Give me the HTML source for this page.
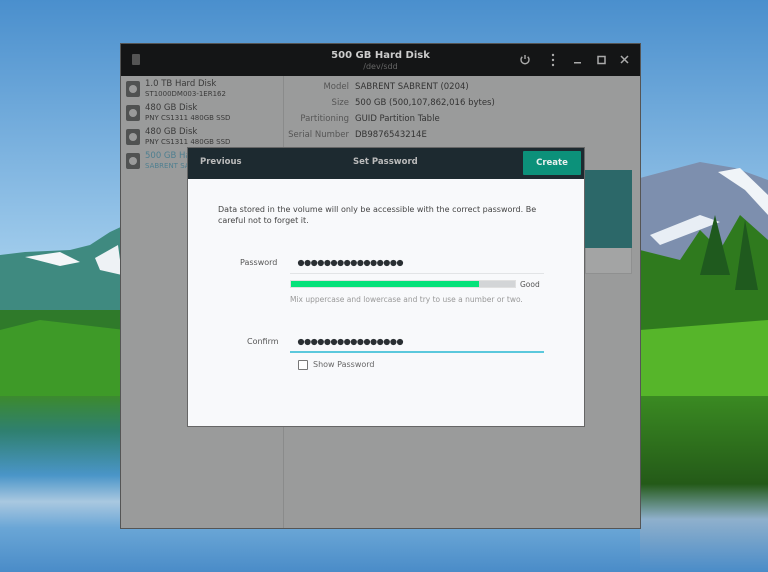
<!DOCTYPE html>
<html><head><style>
*{margin:0;padding:0;box-sizing:border-box}
body{width:768px;height:572px;overflow:hidden;position:relative;font-family:"Liberation Sans","DejaVu Sans",sans-serif;}
.bg{position:absolute;left:0;top:0}
.win{position:absolute;left:120px;top:43px;width:521px;height:486px;background:#9a9b9b;border:1px solid #555;}
.hdr{position:absolute;left:0;top:0;width:100%;height:32px;background:#141516;color:#fff;}
.t1{position:absolute;left:0;width:100%;text-align:center;top:6px;font-size:10px;font-weight:bold;color:#ccc;font-family:"DejaVu Sans",sans-serif}
.t2{position:absolute;left:0;width:100%;text-align:center;top:18px;font-size:8px;color:#666;font-family:"DejaVu Sans",sans-serif}
.side{position:absolute;left:0;top:32px;width:163px;bottom:0;border-right:1px solid #8a8b8b;}
.it{position:absolute;left:5px;height:24px;font-family:"DejaVu Sans",sans-serif}
.ic{position:absolute;left:0;top:3px;width:14px;height:16px;background:#505252;border-radius:2px}
.ic:after{content:"";position:absolute;left:3px;top:4px;width:8px;height:8px;border-radius:50%;background:#9a9b9b}
.n1{position:absolute;left:19px;top:1px;font-size:8.5px;color:#3a3a3a;white-space:nowrap}
.n2{position:absolute;left:19px;top:12px;font-size:7px;color:#3a3a3a;white-space:nowrap}
.lab{position:absolute;width:100px;text-align:right;left:128px;font-size:8.5px;color:#555;font-family:"DejaVu Sans",sans-serif}
.val{position:absolute;left:234px;font-size:8.5px;color:#333;font-family:"DejaVu Sans",sans-serif;white-space:nowrap}
.dlg{position:absolute;left:187px;top:147px;width:398px;height:280px;background:#f8f9fb;border:1px solid #666;font-family:"DejaVu Sans",sans-serif}
.dh{position:absolute;left:0;top:0;width:100%;height:31px;background:#1d2a30;}
.dh span{position:absolute;top:9px;font-size:8.5px;font-weight:bold;color:#bbb}
.btn{position:absolute;left:335px;top:3px;width:58px;height:24px;background:#0c917a;color:#e8f0ee;font-size:8.5px;font-weight:bold;text-align:center;line-height:24px;border-radius:1px}
.dots{position:absolute;left:109px}
</style></head><body>
<svg class="bg" width="768" height="572" viewBox="0 0 768 572">
<defs>
<linearGradient id="sky" x1="0" y1="0" x2="0" y2="1"><stop offset="0" stop-color="#4a8fcd"/><stop offset="0.5" stop-color="#a9d2ef"/><stop offset="1" stop-color="#b5daf2"/></linearGradient>
<linearGradient id="lake" x1="0" y1="0" x2="0" y2="1"><stop offset="0" stop-color="#3c8a2e"/><stop offset="0.2" stop-color="#2f8070"/><stop offset="0.45" stop-color="#4a95c8"/><stop offset="0.6" stop-color="#a9c8e0"/><stop offset="0.75" stop-color="#6aa6d6"/><stop offset="1" stop-color="#4a8cc8"/></linearGradient>
<linearGradient id="lake2" x1="0" y1="0" x2="0" y2="1"><stop offset="0" stop-color="#3a8a22"/><stop offset="0.5" stop-color="#245a18"/><stop offset="0.7" stop-color="#8fb0cc"/><stop offset="1" stop-color="#4a8cc8"/></linearGradient>
</defs>
<rect width="768" height="572" fill="url(#sky)"/>
<polygon points="0,255 25,252 70,250 90,245 110,232 125,225 125,340 0,340" fill="#3f8a80"/>
<polygon points="25,257 60,252 80,262 60,266" fill="#f4f6f8"/>
<polygon points="95,258 118,245 122,275 100,270" fill="#eef2f5"/>
<polygon points="640,178 700,162 735,168 768,180 768,300 640,300" fill="#7d8fae"/>
<polygon points="718,172 740,168 768,195 768,215 745,190" fill="#f0f4f8"/>
<polygon points="650,235 700,215 720,222 660,245" fill="#e8eef5"/>
<rect x="0" y="310" width="125" height="88" fill="#2f7a2a"/>
<polygon points="640,250 680,260 700,230 720,250 740,215 768,240 768,398 640,398" fill="#2f7a1e"/>
<polygon points="640,330 768,320 768,398 640,398" fill="#56b52a"/>
<polygon points="0,330 40,320 125,330 125,398 0,398" fill="#3e9a28"/>
<polygon points="700,275 715,215 730,275" fill="#1f5a1e"/>
<polygon points="735,290 745,220 758,290" fill="#1f5a1e"/>
<rect x="0" y="396" width="768" height="176" fill="url(#lake)"/>
<rect x="640" y="396" width="128" height="176" fill="url(#lake2)"/>
</svg>
<div class="win">
 <div class="hdr">
  <div style="position:absolute;left:11px;top:10px;width:8px;height:11px;background:#555;border-radius:1px"></div>
  <div class="t1">500 GB Hard Disk</div><div class="t2">/dev/sdd</div>
  <svg style="position:absolute;left:398px;top:8px" width="120" height="16" viewBox="0 0 120 16">
   <path d="M6 3v4M3.3 4.8a4 4 0 1 0 5.4 0" stroke="#aaa" stroke-width="1.4" fill="none"/>
   <circle cx="34" cy="3" r="1.2" fill="#aaa"/><circle cx="34" cy="8" r="1.2" fill="#aaa"/><circle cx="34" cy="13" r="1.2" fill="#aaa"/>
   <rect x="55" y="10" width="7" height="1.5" fill="#aaa"/>
   <rect x="79" y="4.5" width="7" height="7" stroke="#aaa" stroke-width="1.5" fill="none"/>
   <path d="M102 4l7 7M109 4l-7 7" stroke="#aaa" stroke-width="1.5"/>
  </svg>
 </div>
 <div class="side">
  <div class="it" style="top:2px"><div class="ic"></div><div class="n1">1.0 TB Hard Disk</div><div class="n2">ST1000DM003-1ER162</div></div>
  <div class="it" style="top:26px"><div class="ic"></div><div class="n1">480 GB Disk</div><div class="n2">PNY CS1311 480GB SSD</div></div>
  <div class="it" style="top:50px"><div class="ic"></div><div class="n1">480 GB Disk</div><div class="n2">PNY CS1311 480GB SSD</div></div>
  <div class="it" style="top:74px"><div class="ic"></div><div class="n1" style="color:#4f7f90">500 GB Hard Disk</div><div class="n2" style="color:#4f7f90">SABRENT SABRENT</div></div>
 </div>
 <div class="lab" style="top:38px">Model</div><div class="val" style="top:38px">SABRENT SABRENT (0204)</div>
 <div class="lab" style="top:54px">Size</div><div class="val" style="top:54px">500 GB (500,107,862,016 bytes)</div>
 <div class="lab" style="top:70px">Partitioning</div><div class="val" style="top:70px">GUID Partition Table</div>
 <div class="lab" style="top:86px">Serial Number</div><div class="val" style="top:86px">DB9876543214E</div>
 <div style="position:absolute;left:464px;top:126px;width:47px;height:78px;background:#2c6869"></div>
 <div style="position:absolute;left:464px;top:204px;width:47px;height:26px;background:#a3a4a4;border:1px solid #8f9090;border-top:0"></div>
</div>
<div class="dlg">
 <div class="dh"><span style="left:12px">Previous</span><span style="left:165px">Set Password</span><div class="btn">Create</div></div>
 <div style="position:absolute;left:30px;top:56px;width:345px;font-size:8px;line-height:11px;color:#444">Data stored in the volume will only be accessible with the correct password. Be careful not to forget it.</div>
 <div style="position:absolute;left:52px;top:110px;font-size:8px;color:#555">Password</div>
 <svg class="dots" style="top:111px" width="110" height="8"><g fill="#2a2f33">
 <circle cx="4" cy="4" r="3.1"/><circle cx="10.6" cy="4" r="3.1"/><circle cx="17.2" cy="4" r="3.1"/><circle cx="23.8" cy="4" r="3.1"/><circle cx="30.4" cy="4" r="3.1"/><circle cx="37" cy="4" r="3.1"/><circle cx="43.6" cy="4" r="3.1"/><circle cx="50.2" cy="4" r="3.1"/><circle cx="56.8" cy="4" r="3.1"/><circle cx="63.4" cy="4" r="3.1"/><circle cx="70" cy="4" r="3.1"/><circle cx="76.6" cy="4" r="3.1"/><circle cx="83.2" cy="4" r="3.1"/><circle cx="89.8" cy="4" r="3.1"/><circle cx="96.4" cy="4" r="3.1"/><circle cx="103" cy="4" r="3.1"/></g></svg>
 <div style="position:absolute;left:102px;top:125px;width:254px;height:1px;background:#e2e4e6"></div>
 <div style="position:absolute;left:102px;top:132px;width:226px;height:8px;background:#d3d5d7;border:1px solid #e0e0e0"></div>
 <div style="position:absolute;left:103px;top:133px;width:188px;height:6px;background:#05e27a"></div>
 <div style="position:absolute;left:332px;top:132px;font-size:7.5px;color:#555">Good</div>
 <div style="position:absolute;left:102px;top:147px;font-size:7.5px;color:#999">Mix uppercase and lowercase and try to use a number or two.</div>
 <div style="position:absolute;left:59px;top:189px;font-size:8px;color:#555">Confirm</div>
 <svg class="dots" style="top:190px" width="110" height="8"><g fill="#2a2f33">
 <circle cx="4" cy="4" r="3.1"/><circle cx="10.6" cy="4" r="3.1"/><circle cx="17.2" cy="4" r="3.1"/><circle cx="23.8" cy="4" r="3.1"/><circle cx="30.4" cy="4" r="3.1"/><circle cx="37" cy="4" r="3.1"/><circle cx="43.6" cy="4" r="3.1"/><circle cx="50.2" cy="4" r="3.1"/><circle cx="56.8" cy="4" r="3.1"/><circle cx="63.4" cy="4" r="3.1"/><circle cx="70" cy="4" r="3.1"/><circle cx="76.6" cy="4" r="3.1"/><circle cx="83.2" cy="4" r="3.1"/><circle cx="89.8" cy="4" r="3.1"/><circle cx="96.4" cy="4" r="3.1"/><circle cx="103" cy="4" r="3.1"/></g></svg>
 <div style="position:absolute;left:102px;top:203px;width:254px;height:1.5px;background:#5bc8dc"></div>
 <div style="position:absolute;left:110px;top:212px;width:10px;height:10px;border:1px solid #777;background:#fff;border-radius:1px"></div>
 <div style="position:absolute;left:125px;top:212px;font-size:8px;color:#666">Show Password</div>
</div>
</body></html>
